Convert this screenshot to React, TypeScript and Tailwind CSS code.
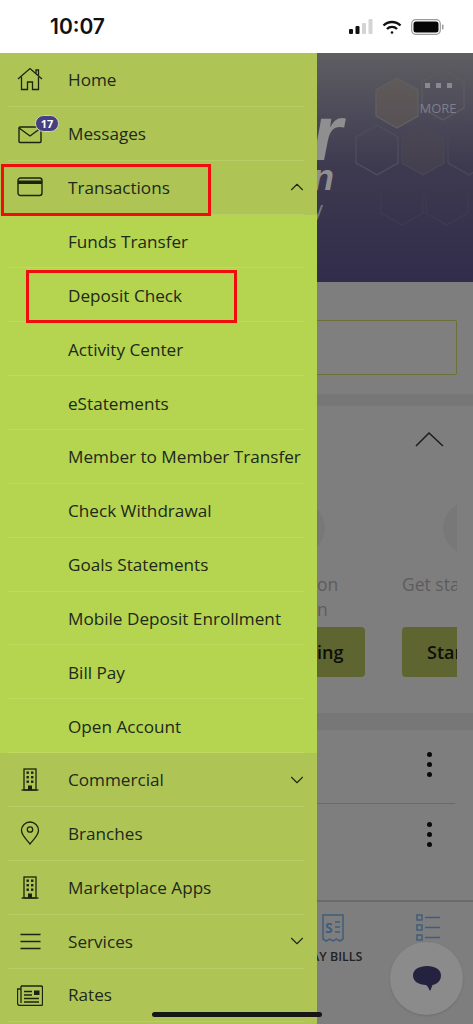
import { ChevronDown, ChevronUp } from "lucide-react";
import type { ReactNode } from "react";

const iconClass = "text-[#1c2410]";

function HomeIcon() {
  return (
    <svg width="26" height="24" viewBox="0 0 26 24" fill="none" stroke="currentColor" strokeWidth="1.3" className={iconClass}>
      <path d="M1 12 13 1.500 25 12" />
      <path d="M19 6.500V3h2.500v5.600" />
      <path d="M4.500 10v12.500h6V15h5v7.500h6V10" />
    </svg>
  );
}

function MailIcon() {
  return (
    <svg width="24" height="18" viewBox="0 0 24 18" fill="none" stroke="currentColor" strokeWidth="1.4" className={iconClass}>
      <rect x="1" y="1" width="22" height="15.500" rx="1" />
      <path d="M1 2 12 10 23 2" />
    </svg>
  );
}

function CardIcon() {
  return (
    <svg width="26" height="20" viewBox="0 0 26 20" fill="none" stroke="currentColor" strokeWidth="1.4" className={iconClass}>
      <rect x="1" y="1" width="24" height="17.500" rx="2.500" />
      <rect x="1" y="3.500" width="24" height="3.500" fill="currentColor" stroke="none" />
    </svg>
  );
}

function BuildingIcon() {
  return (
    <svg width="18" height="23" viewBox="0 0 18 23" fill="none" stroke="currentColor" strokeWidth="1.3" className={iconClass}>
      <rect x="3" y="1" width="12" height="21" />
      <path d="M0.500 22h17" />
      <g fill="currentColor" stroke="none">
        <rect x="5.500" y="3.500" width="2.400" height="2.400" />
        <rect x="10" y="3.500" width="2.400" height="2.400" />
        <rect x="5.500" y="8" width="2.400" height="2.400" />
        <rect x="10" y="8" width="2.400" height="2.400" />
        <rect x="5.500" y="12.500" width="2.400" height="2.400" />
        <rect x="10" y="12.500" width="2.400" height="2.400" />
        <rect x="7" y="17.500" width="4" height="4.500" />
      </g>
    </svg>
  );
}

function PinIcon() {
  return (
    <svg width="20" height="24" viewBox="0 0 20 24" fill="none" stroke="currentColor" strokeWidth="1.3" className={iconClass}>
      <path d="M10 23C6 18 1.500 14 1.500 9.500a8.500 8.500 0 0 1 17 0C18.500 14 14 18 10 23Z" />
      <circle cx="10" cy="8.500" r="2.700" />
    </svg>
  );
}

function BarsIcon() {
  return (
    <svg width="21" height="17" viewBox="0 0 21 17" fill="none" stroke="currentColor" strokeWidth="1.4" className={iconClass}>
      <path d="M0.500 1.500h20M0.500 8.500h20M0.500 15.500h20" />
    </svg>
  );
}

function NewsIcon() {
  return (
    <svg width="26" height="21" viewBox="0 0 26 21" fill="none" stroke="currentColor" strokeWidth="1.3" className={iconClass}>
      <path d="M4 1h20a1.500 1.500 0 0 1 1.500 1.500v16.500a1.500 1.500 0 0 1-1.500 1.500H3a2.500 2.500 0 0 1-2.500-2.500V4H4" />
      <path d="M4 1v17" />
      <path d="M7 6.500h8M7 10h8M7 13.500h15M7 17h15" />
      <rect x="17" y="5.500" width="5.500" height="4.500" fill="currentColor" stroke="none" />
    </svg>
  );
}

function MenuRow({ icon, label, chevron }: { icon: ReactNode; label: string; chevron?: "up" | "down" }) {
  return (
    <div className="h-[53.86px] flex items-center ml-2 mr-[13px] border-b border-[#b9cd66]">
      <div className="w-[44px] flex justify-center">{icon}</div>
      <span className="ml-[16px] text-[17.15px] leading-none text-[#20281a]">{label}</span>
      {chevron === "up" && <ChevronUp size={22} strokeWidth={1.2} className="ml-auto -mr-[4px] text-[#20281a]" />}
      {chevron === "down" && <ChevronDown size={22} strokeWidth={1.2} className="ml-auto -mr-[4px] text-[#20281a]" />}
    </div>
  );
}

function SubRow({ label }: { label: string }) {
  return (
    <div className="h-[53.86px] flex items-center ml-2 mr-[13px] pl-[60px] pt-[1px] border-b border-[#bedb60] text-[17.15px] leading-none text-[#20281a]">
      {label}
    </div>
  );
}

function Hexagons() {
  const hexes = [
    { x: 80, y: 103, fill: "#6e6152", stroke: "#5f5e62" },
    { x: 126, y: 95, fill: "none", stroke: "#5b5a60" },
    { x: 60, y: 150, fill: "none", stroke: "#4d4b5e" },
    { x: 106, y: 150, fill: "#51494d", stroke: "#484659" },
    { x: 152, y: 150, fill: "none", stroke: "#484659" },
    { x: 85, y: 200, fill: "none", stroke: "#3d3a53" },
    { x: 130, y: 200, fill: "none", stroke: "#3d3a53" },
  ];
  return (
    <svg width="156" height="229" viewBox="0 53 156 229" className="absolute inset-0" fill="none">
      {hexes.map((h, i) => (
        <path
          key={i}
          transform={`translate(${h.x} ${h.y})`}
          d="M0 -25 21 -13V13L0 25-21 13V-13Z"
          fill={h.fill}
          fillOpacity="0.4"
          stroke={h.stroke}
          strokeWidth="1.500"
        />
      ))}
    </svg>
  );
}

function DotsVertical() {
  return (
    <div className="flex flex-col gap-[5px] items-center">
      <div className="w-[5px] h-[5px] rounded-full bg-[#0b0b0b]" />
      <div className="w-[5px] h-[5px] rounded-full bg-[#0b0b0b]" />
      <div className="w-[5px] h-[5px] rounded-full bg-[#0b0b0b]" />
    </div>
  );
}

export default function App() {
  return (
    <div className="relative w-[473px] h-[1024px] overflow-hidden bg-white font-['Open_Sans',sans-serif]">
      {/* status bar */}
      <div className="h-[53px] flex items-center justify-between pl-[50px] pr-[29px] pt-[1px] bg-white">
        <span className="text-[21px] font-semibold text-[#111] font-['Inter',sans-serif]">10:07</span>
        <div className="flex items-center gap-[9px]">
          <svg width="24" height="16" viewBox="0 0 24 16">
            <rect x="0" y="10" width="4" height="5" rx="1" fill="#111" />
            <rect x="6.500" y="7" width="4" height="8" rx="1" fill="#111" />
            <rect x="13" y="4" width="4" height="11" rx="1" fill="#d4d4d4" />
            <rect x="19.500" y="0" width="4" height="15" rx="1" fill="#d4d4d4" />
          </svg>
          <svg width="20" height="15" viewBox="0 0 20 15" fill="none" stroke="#111" strokeWidth="2.400">
            <path d="M1.500 5.500a12 12 0 0 1 17 0" />
            <path d="M5 9a7 7 0 0 1 10 0" />
            <circle cx="10" cy="12.500" r="1.300" fill="#111" stroke="none" />
          </svg>
          <svg width="33" height="16" viewBox="0 0 33 16" fill="none">
            <rect x="0.700" y="0.700" width="28.600" height="14.600" rx="4" stroke="#9a9a9a" strokeWidth="1.200" />
            <rect x="2.500" y="2.500" width="25" height="11" rx="2.500" fill="#050505" />
            <rect x="31" y="5.500" width="1.500" height="5" rx="0.700" fill="#9a9a9a" />
          </svg>
        </div>
      </div>

      <div className="flex h-[971px]">
        {/* side menu */}
        <div className="w-[317px] shrink-0 bg-[#aec555] flex flex-col">
          <MenuRow icon={<HomeIcon />} label="Home" />
          <MenuRow
            icon={
              <div className="relative mt-[3px]">
                <MailIcon />
                <span className="absolute -top-[11px] left-[17px] w-[24px] h-[17px] rounded-full bg-[#453f80] border border-[#cfd5b8] flex items-center justify-center text-[11px] font-bold leading-none text-white">
                  17
                </span>
              </div>
            }
            label="Messages"
          />
          <MenuRow icon={<CardIcon />} label="Transactions" chevron="up" />
          <div className="bg-[#b5d44f]">
            <SubRow label="Funds Transfer" />
            <SubRow label="Deposit Check" />
            <SubRow label="Activity Center" />
            <SubRow label="eStatements" />
            <SubRow label="Member to Member Transfer" />
            <SubRow label="Check Withdrawal" />
            <SubRow label="Goals Statements" />
            <SubRow label="Mobile Deposit Enrollment" />
            <SubRow label="Bill Pay" />
            <SubRow label="Open Account" />
          </div>
          <MenuRow icon={<BuildingIcon />} label="Commercial" chevron="down" />
          <MenuRow icon={<PinIcon />} label="Branches" />
          <MenuRow icon={<BuildingIcon />} label="Marketplace Apps" />
          <MenuRow icon={<BarsIcon />} label="Services" chevron="down" />
          <MenuRow icon={<NewsIcon />} label="Rates" />
        </div>

        {/* dimmed page behind the menu */}
        <div className="flex-1 min-w-0 flex flex-col bg-[#7f7e7f] overflow-hidden">
          <div className="relative h-[229px] shrink-0 overflow-hidden bg-gradient-to-b from-[#5f5e62] via-[#3d3a50] to-[#312c4a]">
            <Hexagons />
            <span className="absolute -left-[5px] top-[41px] text-[78px] leading-none font-bold italic text-[#8f8f90] font-['Liberation_Sans',sans-serif]">
              r
            </span>
            <span className="absolute -left-[5px] top-[107px] text-[36px] leading-none font-bold italic text-[#8f8f90] font-['Liberation_Sans',sans-serif]">
              n
            </span>
            <span className="absolute -left-[5px] top-[144px] text-[22px] leading-none text-[#77767f]">y</span>
            <div className="absolute right-[17px] top-[30px] w-[36px] flex flex-col items-center">
              <div className="flex gap-[6px]">
                <div className="w-[5px] h-[5px] bg-[#8a8993]" />
                <div className="w-[5px] h-[5px] bg-[#8a8993]" />
                <div className="w-[5px] h-[5px] bg-[#8a8993]" />
              </div>
              <span className="mt-[14px] text-[13px] leading-none text-[#7f7e89]">MORE</span>
            </div>
          </div>

          <div className="h-[38px] shrink-0" />
          <div className="h-[55px] shrink-0 mr-[16px] border border-l-0 border-[#6d7039] rounded-r-[2px] bg-[#807f80]" />
          <div className="h-[19px] shrink-0" />
          <div className="h-[12px] shrink-0 bg-[#787778]" />

          <div className="h-[307px] shrink-0 relative">
            <svg width="30" height="16" viewBox="0 0 30 16" fill="none" stroke="#1d1d1d" strokeWidth="1.500" className="absolute left-[98px] top-[25px]">
              <path d="M1 15 14 2l14 13" />
            </svg>
            <div className="flex h-full pr-[16px]">
              <div className="w-[85px] shrink-0 overflow-hidden flex flex-col">
                <div className="w-[56px] h-[52px] mt-[96px] -ml-[48px] rounded-full bg-[#797879]" />
                <span className="mt-[18px] text-[17.5px] leading-[25px] text-[#5d5c5d]">on</span>
                <span className="text-[17.5px] leading-[25px] text-[#5d5c5d]">n</span>
              </div>
              <div className="flex-1 min-w-0 overflow-hidden flex flex-col">
                <div className="w-[56px] h-[52px] mt-[96px] ml-[41px] rounded-full bg-[#797879]" />
                <span className="mt-[18px] text-[17.5px] leading-[25px] whitespace-nowrap text-[#5d5c5d]">Get started</span>
              </div>
            </div>
            <div className="absolute left-0 top-[221px] w-[48px] h-[50px] rounded-r-[4px] bg-[#5f6530] flex items-center text-[18px] font-semibold text-[#0e0f08]">
              ing
            </div>
            <div className="absolute left-[85px] top-[221px] w-[55px] h-[50px] rounded-l-[4px] overflow-hidden bg-[#5f6530] flex items-center pl-[25px] text-[18px] font-semibold text-[#0e0f08] whitespace-nowrap">
              Start
            </div>
          </div>

          <div className="h-[17px] shrink-0 bg-[#787778]" />
          <div className="h-[74px] shrink-0 mr-[18px] border-b border-[#6b6a6b] flex items-center justify-end pr-[23px] pb-[4px]">
            <DotsVertical />
          </div>
          <div className="h-[96px] shrink-0 flex items-start justify-end pr-[41px] pt-[18px]">
            <DotsVertical />
          </div>

          <div className="flex-1 border-t-2 border-[#6b6a6b] relative overflow-hidden">
            <svg width="22" height="29" viewBox="0 0 22 29" fill="none" stroke="#3f5d7c" strokeWidth="1.500" className="absolute left-[5px] top-[12px]">
              <path d="M1 1h20v24l-3.300 2-3.300-2-3.400 2-3.400-2-3.300 2L1 25Z" />
              <path d="M13 8h5M13 13h5M13 18h5" />
              <text x="3" y="19" fontSize="14" fontWeight="700" fill="#3f5d7c" stroke="none">S</text>
            </svg>
            <svg width="24" height="28" viewBox="0 0 24 28" fill="none" stroke="#3f5d7c" strokeWidth="1.500" className="absolute left-[99px] top-[12px]">
              <rect x="1" y="1" width="5" height="5" />
              <rect x="1" y="11" width="5" height="5" />
              <rect x="1" y="21" width="5" height="5" />
              <path d="M9 3.500h15M9 13.500h15M9 23.500h15" />
            </svg>
            <span className="absolute -left-[6px] top-[49px] text-[12.5px] leading-none font-semibold text-[#232323] whitespace-nowrap">
              AY BILLS
            </span>
          </div>
        </div>
      </div>

      {/* red annotation boxes */}
      <div className="absolute left-[1px] top-[164px] w-[210px] h-[52px] border-[3px] border-[#f00d0d]" />
      <div className="absolute left-[26px] top-[270px] w-[211px] h-[53px] border-[3px] border-[#f00d0d]" />

      {/* chat bubble */}
      <div className="absolute left-[390px] top-[942px] w-[73px] h-[73px] rounded-full bg-[#8c8b8c] flex items-center justify-center shadow-sm">
        <svg width="28" height="26" viewBox="0 0 28 26">
          <path d="M14 0c8 0 14 3.500 14 9.500S22.500 19 19.500 19c-.8 2-1.500 4.500-2.500 6-1-2-2-4.500-4-6C6 19 0 15.500 0 9.500S6 0 14 0Z" fill="#25223f" />
        </svg>
      </div>

      {/* home indicator */}
      <div className="absolute left-[152px] top-[1012px] w-[170px] h-[5px] rounded-full bg-[#161616]" />
    </div>
  );
}
